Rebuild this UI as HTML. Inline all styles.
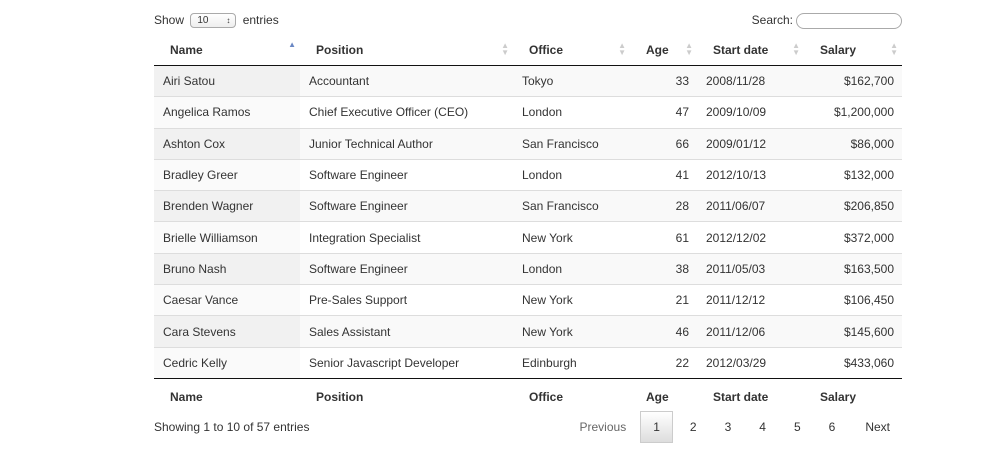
<!DOCTYPE html>
<html><head><style>
body{margin:0;background:#fff;font-family:"Liberation Sans",Arial,sans-serif;font-size:12px;color:#333;}
.wrap{position:absolute;left:154px;top:0;width:748px;}
.top{position:absolute;top:13px;left:0;width:748px;height:20px;}
.sel{display:inline-block;width:38px;height:13px;border:1px solid #aaa;border-radius:4px;font-size:10px;line-height:13px;padding-left:6px;box-sizing:content-box;vertical-align:middle;position:relative;margin:0 3px;background:linear-gradient(#fff,#eee)}
.sel:after{content:"\2195";position:absolute;right:5px;top:0;font-size:8px}
.search{position:absolute;right:0;top:0}
.search span{display:inline-block;width:104px;height:14px;border:1px solid #aaa;border-radius:8px;vertical-align:middle;margin-left:3px}
table{position:absolute;top:34px;left:0;width:748px;border-collapse:collapse;table-layout:fixed}
th{font-weight:bold;text-align:left;padding:0 0 0 16px;position:relative;font-size:12px}
thead th{border-bottom:1px solid #111;height:31px}
tfoot th{border-top:1px solid #111;height:36px}
td{height:30.3px;padding:0 8px 0 9px;border-top:1px solid #ddd;white-space:nowrap}
tbody tr:first-child td{border-top:none}
tbody tr:nth-child(odd) td{background:#f9f9f9}
tbody tr:nth-child(odd) td:first-child{background:#f1f1f1}
tbody tr:nth-child(even) td:first-child{background:#fafafa}
.r{text-align:right}
.s{position:absolute;right:4px;top:8px;font-size:8px;line-height:7px;color:#ccc}
.bot{position:absolute;top:420px;left:0;width:748px}
.pg{position:absolute;right:0;top:-9px;display:flex;align-items:center}
.pg span{display:inline-block;padding:0 14px;line-height:30px;color:#333}
.pg .d{color:#666;margin-right:0;padding-right:14px}
.pg .c{border:1px solid #ccc;background:linear-gradient(#fff,#ddd);padding:0 12px;margin-right:3px;}
.pg .n{padding-right:12px;padding-left:16px}
</style></head><body>
<div class="wrap">
<div class="top">Show <span class="sel">10</span> entries
<div class="search">Search:<span></span></div></div>
<table>
<colgroup><col style="width:146px"><col style="width:213px"><col style="width:117px"><col style="width:67px"><col style="width:107px"><col style="width:98px"></colgroup>
<thead><tr><th>Name<span class="s" style="color:#6a87c4;top:7px">▲</span></th><th>Position<span class="s">▲<br>▼</span></th><th>Office<span class="s">▲<br>▼</span></th><th>Age<span class="s">▲<br>▼</span></th><th>Start date<span class="s">▲<br>▼</span></th><th>Salary<span class="s">▲<br>▼</span></th></tr></thead>
<tbody>
<tr><td>Airi Satou</td><td>Accountant</td><td>Tokyo</td><td class="r">33</td><td>2008/11/28</td><td class="r">$162,700</td></tr>
<tr><td>Angelica Ramos</td><td>Chief Executive Officer (CEO)</td><td>London</td><td class="r">47</td><td>2009/10/09</td><td class="r">$1,200,000</td></tr>
<tr><td>Ashton Cox</td><td>Junior Technical Author</td><td>San Francisco</td><td class="r">66</td><td>2009/01/12</td><td class="r">$86,000</td></tr>
<tr><td>Bradley Greer</td><td>Software Engineer</td><td>London</td><td class="r">41</td><td>2012/10/13</td><td class="r">$132,000</td></tr>
<tr><td>Brenden Wagner</td><td>Software Engineer</td><td>San Francisco</td><td class="r">28</td><td>2011/06/07</td><td class="r">$206,850</td></tr>
<tr><td>Brielle Williamson</td><td>Integration Specialist</td><td>New York</td><td class="r">61</td><td>2012/12/02</td><td class="r">$372,000</td></tr>
<tr><td>Bruno Nash</td><td>Software Engineer</td><td>London</td><td class="r">38</td><td>2011/05/03</td><td class="r">$163,500</td></tr>
<tr><td>Caesar Vance</td><td>Pre-Sales Support</td><td>New York</td><td class="r">21</td><td>2011/12/12</td><td class="r">$106,450</td></tr>
<tr><td>Cara Stevens</td><td>Sales Assistant</td><td>New York</td><td class="r">46</td><td>2011/12/06</td><td class="r">$145,600</td></tr>
<tr><td>Cedric Kelly</td><td>Senior Javascript Developer</td><td>Edinburgh</td><td class="r">22</td><td>2012/03/29</td><td class="r">$433,060</td></tr>
</tbody>
<tfoot><tr><th>Name</th><th>Position</th><th>Office</th><th>Age</th><th>Start date</th><th>Salary</th></tr></tfoot>
</table>
<div class="bot">Showing 1 to 10 of 57 entries
<div class="pg"><span class="d">Previous</span><span class="c">1</span><span>2</span><span>3</span><span>4</span><span>5</span><span>6</span><span class="n">Next</span></div></div>
</div>
</body></html>
